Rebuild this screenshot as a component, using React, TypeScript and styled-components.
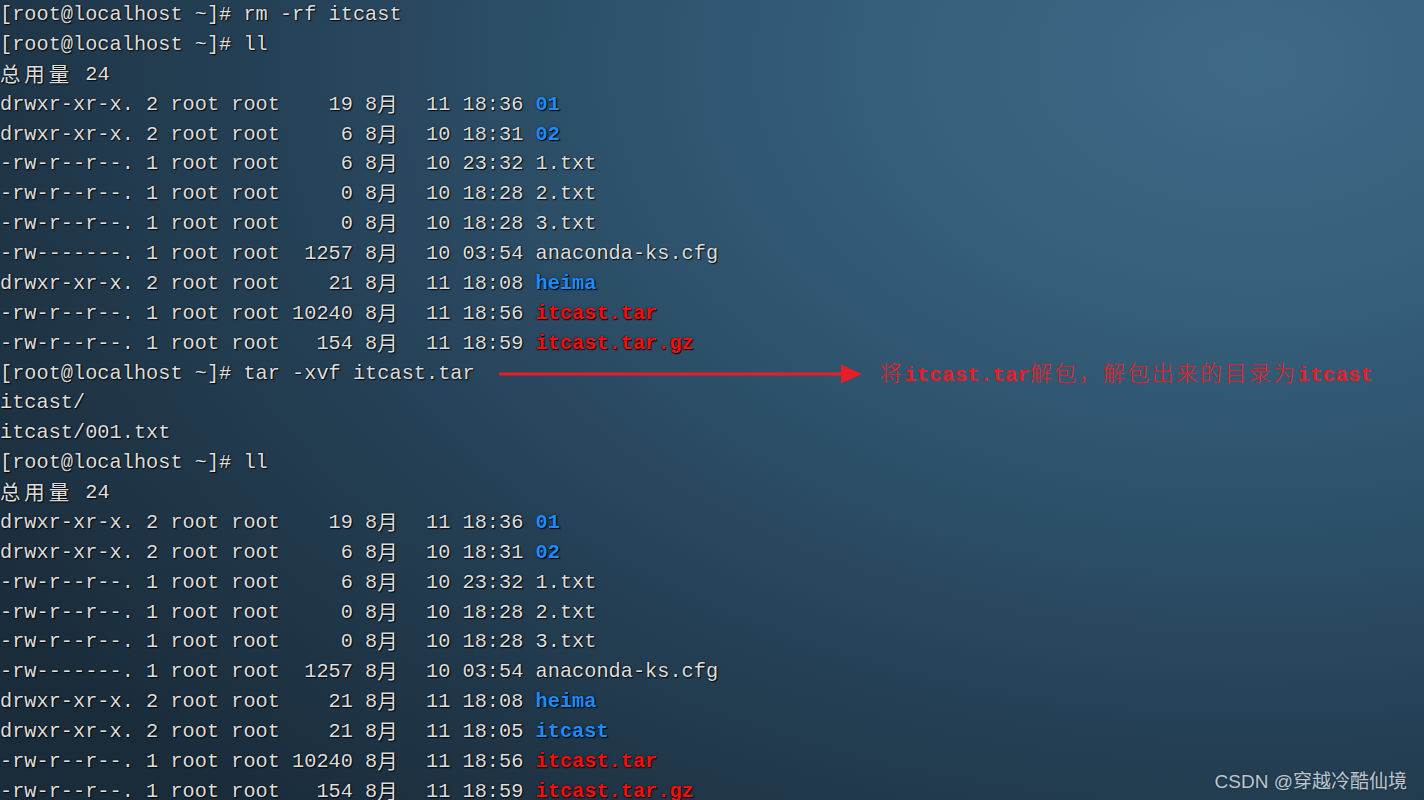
import React from 'react';
import styled, { createGlobalStyle } from 'styled-components';

const Global = createGlobalStyle`
  html, body {
    margin: 0;
    padding: 0;
    width: 1424px;
    height: 800px;
    overflow: hidden;
    background: #1d3140;
  }
  #root { width: 1424px; height: 800px; }
`;

const Screen = styled.div`
  position: relative;
  width: 1424px;
  height: 800px;
  overflow: hidden;
  background: radial-gradient(ellipse 1500px 1000px at 88% 8%, #3d6a87 0%, #36607c 22%, #2d516b 45%, #243f54 68%, #1a2c3a 100%);
`;

const Terminal = styled.div`
  display: flex;
  flex-direction: column;
  font-family: "Liberation Mono", "Noto Sans CJK SC", monospace;
  font-size: 20.3px;
  line-height: 29.88px;
  color: #dedede;
  text-shadow: 1px 1px 1px rgba(0, 0, 0, 0.85), 0 0 2px rgba(0, 0, 0, 0.55);
  white-space: pre;
`;

const Line = styled.div`
  height: 29.88px;
  display: block;
`;

const Wide = styled.span`
  display: inline-block;
  vertical-align: top;
  width: 24.36px;
  height: 29.88px;
  line-height: 26px;
  font-family: "Noto Sans CJK SC", sans-serif;
  font-size: 20.5px;
`;

const Name = styled.span<{ $kind: 'dir' | 'arc' }>`
  font-weight: bold;
  color: ${(p) => (p.$kind === 'dir' ? '#1a8cff' : '#ff0a0a')};
  text-shadow: 1px 1px 1px rgba(0, 0, 0, 0.9), 0 0 2px rgba(0, 0, 0, 0.6);
`;

const Arrow = styled.svg`
  display: inline-block;
  vertical-align: top;
  margin-top: 4px;
  margin-left: 24px;
  margin-right: 18px;
`;

const Note = styled.span`
  display: inline-block;
  vertical-align: top;
  height: 29.88px;
  line-height: 25px;
  color: #e81e26;
  text-shadow: none;
`;

const NoteLatin = styled.span`
  font-family: "Liberation Mono", monospace;
  font-weight: bold;
  font-size: 21px;
`;

const NoteCjk = styled.span`
  font-family: "Noto Sans CJK SC", sans-serif;
  font-weight: 300;
  font-size: 22px;
  letter-spacing: 2.3px;
`;

const Watermark = styled.div`
  position: absolute;
  right: 17px;
  bottom: 7px;
  font-family: "Liberation Sans", "Noto Sans CJK SC", sans-serif;
  font-size: 19px;
  color: rgba(235, 240, 245, 0.78);
  text-shadow: 0 0 2px rgba(0, 0, 0, 0.3);
`;

const Mixed: React.FC<{ s: string }> = ({ s }) => {
  const parts: React.ReactNode[] = [];
  let buf = '';
  let k = 0;
  for (const ch of s) {
    if (ch.charCodeAt(0) > 127) {
      if (buf) {
        parts.push(buf);
        buf = '';
      }
      parts.push(<Wide key={k++}>{ch}</Wide>);
    } else {
      buf += ch;
    }
  }
  if (buf) parts.push(buf);
  return <>{parts}</>;
};

type Row = { text: string; name?: string; kind?: 'dir' | 'arc' };

const listing: Row[] = [
  { text: '总用量 24' },
  { text: 'drwxr-xr-x. 2 root root    19 8月  11 18:36 ', name: '01', kind: 'dir' },
  { text: 'drwxr-xr-x. 2 root root     6 8月  10 18:31 ', name: '02', kind: 'dir' },
  { text: '-rw-r--r--. 1 root root     6 8月  10 23:32 1.txt' },
  { text: '-rw-r--r--. 1 root root     0 8月  10 18:28 2.txt' },
  { text: '-rw-r--r--. 1 root root     0 8月  10 18:28 3.txt' },
  { text: '-rw-------. 1 root root  1257 8月  10 03:54 anaconda-ks.cfg' },
  { text: 'drwxr-xr-x. 2 root root    21 8月  11 18:08 ', name: 'heima', kind: 'dir' },
];

const first: Row[] = [
  { text: '[root@localhost ~]# rm -rf itcast' },
  { text: '[root@localhost ~]# ll' },
  ...listing,
  { text: '-rw-r--r--. 1 root root 10240 8月  11 18:56 ', name: 'itcast.tar', kind: 'arc' },
  { text: '-rw-r--r--. 1 root root   154 8月  11 18:59 ', name: 'itcast.tar.gz', kind: 'arc' },
];

const second: Row[] = [
  { text: 'itcast/' },
  { text: 'itcast/001.txt' },
  { text: '[root@localhost ~]# ll' },
  ...listing,
  { text: 'drwxr-xr-x. 2 root root    21 8月  11 18:05 ', name: 'itcast', kind: 'dir' },
  { text: '-rw-r--r--. 1 root root 10240 8月  11 18:56 ', name: 'itcast.tar', kind: 'arc' },
  { text: '-rw-r--r--. 1 root root   154 8月  11 18:59 ', name: 'itcast.tar.gz', kind: 'arc' },
];

const renderRow = (r: Row, i: number, prefix: string) => (
  <Line key={prefix + i}>
    <Mixed s={r.text} />
    {r.name && <Name $kind={r.kind!}>{r.name}</Name>}
  </Line>
);

export default function App() {
  return (
    <Screen>
      <Global />
      <Terminal>
        {first.map((r, i) => renderRow(r, i, 'a'))}
        <Line>
          {'[root@localhost ~]# tar -xvf itcast.tar'}
          <Arrow width="363" height="22" viewBox="0 0 363 22">
            <line x1="0" y1="11" x2="346" y2="11" stroke="#e81e26" strokeWidth="3.2" />
            <polygon points="342,1.5 363,11 342,20.5" fill="#e81e26" />
          </Arrow>
          <Note>
            <NoteCjk>将</NoteCjk>
            <NoteLatin>itcast.tar</NoteLatin>
            <NoteCjk>解包，</NoteCjk>
            <NoteCjk>解包出来的目录为</NoteCjk>
            <NoteLatin>itcast</NoteLatin>
          </Note>
        </Line>
        {second.map((r, i) => renderRow(r, i, 'b'))}
      </Terminal>
      <Watermark>CSDN @穿越冷酷仙境</Watermark>
    </Screen>
  );
}
